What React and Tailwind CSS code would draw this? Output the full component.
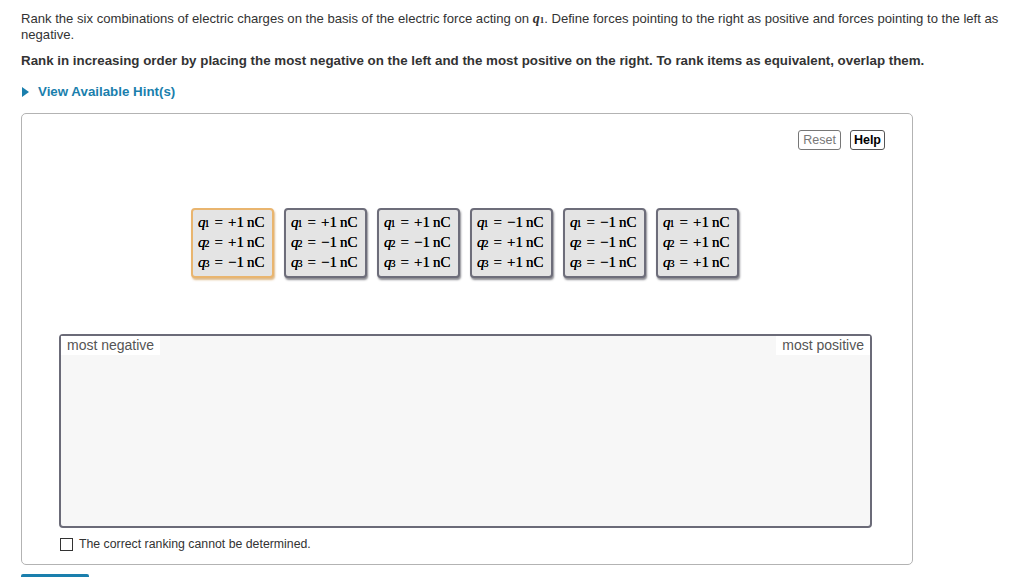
import React from "react";

const tiles = [
  ["+", "+", "−"],
  ["+", "−", "−"],
  ["+", "−", "+"],
  ["−", "+", "+"],
  ["−", "−", "−"],
  ["+", "+", "+"],
];

function Line({ i, s }) {
  return (
    <div className="flex items-baseline leading-[19px] whitespace-nowrap">
      <span className="italic">q</span>
      <span className="text-[10px] -ml-[1px]">{i}</span>
      <span className="mx-[5px]">=</span>
      <span>{s}1</span>
      <span className="ml-[3px]">nC</span>
    </div>
  );
}

function Tile({ signs, active }) {
  return (
    <div
      className={
        "w-[83px] h-[70px] rounded-[4px] border-2 bg-[#e4e4e4] px-[5px] pt-[3px] text-[15px] text-black [text-shadow:0_0_0.4px_#000] " +
        (active
          ? "border-[#e9b56f] shadow-[1px_2px_2px_rgba(200,140,60,0.6)]"
          : "border-[#6d6d7a] shadow-[1px_2px_2px_rgba(60,60,70,0.6)]")
      }
      style={{ fontFamily: '"Liberation Serif", "DejaVu Serif", serif' }}
    >
      <Line i="1" s={signs[0]} />
      <Line i="2" s={signs[1]} />
      <Line i="3" s={signs[2]} />
    </div>
  );
}

export default function App() {
  return (
    <div
      className="w-[1009px] h-[577px] overflow-hidden bg-white pl-[21px] pr-[4px] pt-[11px] text-[#333]"
      style={{ fontFamily: '"Liberation Sans", Arial, sans-serif' }}
    >
      <p className="text-[13.1px] leading-[16px]">
        Rank the six combinations of electric charges on the basis of the electric force acting on{" "}
        <span
          className="italic font-bold text-[14px] leading-none"
          style={{ fontFamily: '"Liberation Serif", serif' }}
        >
          q<span className="not-italic text-[9px] leading-none">1</span>
        </span>
        . Define forces pointing to the right as positive and forces pointing to the left as negative.
      </p>
      <p className="mt-[10px] text-[13.33px] font-bold leading-[16px]">
        Rank in increasing order by placing the most negative on the left and the most positive on the right. To rank items as equivalent, overlap them.
      </p>
      <div className="mt-[15px] flex items-center text-[13.33px] font-bold text-[#1a7fad] leading-[16px]">
        <svg width="8" height="10" viewBox="0 0 8 10" className="ml-[1px] mr-[8px]">
          <path d="M0 0 L7 5 L0 10 Z" fill="#1a7fad" />
        </svg>
        View Available Hint(s)
      </div>

      <div className="mt-[13px] w-[892px] h-[452px] rounded-[5px] border border-[#b3b3b3] bg-white">
        <div className="flex justify-end gap-[9px] pr-[27px] pt-[16px]">
          <button className="h-[20px] px-[4px] rounded-[3px] border border-[#777] text-[12.5px] leading-[18px] text-[#777] bg-white">
            Reset
          </button>
          <button className="h-[20px] px-[3px] rounded-[3px] border border-[#555] text-[12.5px] leading-[18px] font-bold text-black bg-white">
            Help
          </button>
        </div>

        <div className="mt-[58px] flex justify-center gap-[10px] pr-[4px]">
          {tiles.map((t, k) => (
            <Tile key={k} signs={t} active={k === 0} />
          ))}
        </div>

        <div className="mt-[56px] ml-[37px] w-[813px] h-[194px] rounded-[4px] border-2 border-[#6b6b78] bg-[#f7f7f7] flex justify-between items-start">
          <span className="bg-white px-[6px] text-[14px] leading-[19px] text-[#555]">most negative</span>
          <span className="bg-white px-[6px] text-[14px] leading-[19px] text-[#555]">most positive</span>
        </div>

        <div className="mt-[8px] ml-[38px] flex items-center gap-[6px]">
          <div className="w-[13px] h-[13px] border border-[#333] bg-white"></div>
          <span className="text-[12.3px] text-[#333] leading-[16px]">The correct ranking cannot be determined.</span>
        </div>
      </div>
      <div className="mt-[9px] w-[68px] h-[4px] bg-[#1a7fad] rounded-t-[2px]"></div>
    </div>
  );
}
